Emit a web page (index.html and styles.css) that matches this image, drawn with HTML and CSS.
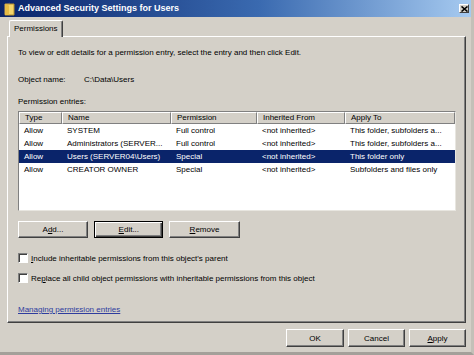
FILE: index.html
```html
<!DOCTYPE html>
<html>
<head>
<meta charset="utf-8">
<title>Advanced Security Settings for Users</title>
<link rel="stylesheet" href="styles.css">
</head>
<body>
<div class="window">
  <div class="titlebar">
    <svg class="ticon" width="12" height="14" viewBox="0 0 12 14">
      <path d="M1 2 L7 0.5 L7 13.5 L1 12 Z" fill="#2a3f8f"/>
      <path d="M2 2 L11 2 L11 13 L2 13 Z" fill="#f4d56a" stroke="#b8902a" stroke-width="1"/>
      <path d="M2 2 L6 3.5 L6 13 L2 13 Z" fill="#e6bb45"/>
    </svg>
    <span class="title">Advanced Security Settings for Users</span>
    <span class="close"><svg width="7" height="6" viewBox="0 0 7 6"><path d="M0.5 0.5 L6.5 5.5 M6.5 0.5 L0.5 5.5" stroke="#000" stroke-width="1.6"/></svg></span>
  </div>
  <div class="client">
    <div class="tabs"><div class="tab">Permissions</div></div>
    <div class="panel">
      <p class="intro">To view or edit details for a permission entry, select the entry and then click Edit.</p>
      <div class="objrow"><span class="lbl">Object name:</span><span>C:\Data\Users</span></div>
      <div class="entries-lbl">Permission entries:</div>
      <div class="list">
        <div class="row hdr">
          <div class="hc">Type</div><div class="hc">Name</div><div class="hc">Permission</div><div class="hc">Inherited From</div><div class="hc">Apply To</div>
        </div>
        <div class="row">
          <div class="c">Allow</div><div class="c">SYSTEM</div><div class="c">Full control</div><div class="c">&lt;not inherited&gt;</div><div class="c">This folder, subfolders a...</div>
        </div>
        <div class="row">
          <div class="c">Allow</div><div class="c">Administrators (SERVER...</div><div class="c">Full control</div><div class="c">&lt;not inherited&gt;</div><div class="c">This folder, subfolders a...</div>
        </div>
        <div class="row sel">
          <div class="c">Allow</div><div class="c">Users (SERVER04\Users)</div><div class="c">Special</div><div class="c">&lt;not inherited&gt;</div><div class="c">This folder only</div>
        </div>
        <div class="row">
          <div class="c">Allow</div><div class="c">CREATOR OWNER</div><div class="c">Special</div><div class="c">&lt;not inherited&gt;</div><div class="c">Subfolders and files only</div>
        </div>
      </div>
      <div class="btnrow">
        <div class="btn">A<u>d</u>d...</div>
        <div class="btn default">&#8202;<u>E</u>dit...</div>
        <div class="btn wide"><u>R</u>emove</div>
      </div>
      <div class="chk"><span class="box"></span><span><u>I</u>nclude inheritable permissions from this object's parent</span></div>
      <div class="chk"><span class="box"></span><span>Re<u>p</u>lace all child object permissions with inheritable permissions from this object</span></div>
      <a class="link" href="#">Managing permission entries</a>
    </div>
    <div class="footer">
      <div class="btn fbtn ok">OK</div>
      <div class="btn fbtn">Cancel</div>
      <div class="btn fbtn"><u>A</u>pply</div>
    </div>
  </div>
</div>
</body>
</html>
```
FILE: styles.css
```css
html, body {
  margin: 0;
  padding: 0;
}
body {
  width: 474px;
  height: 355px;
  overflow: hidden;
  background: #d4d0c8;
  font-family: "Liberation Sans", Arial, sans-serif;
  font-size: 8px;
  color: #000;
}
.window {
  width: 474px;
  height: 355px;
  box-sizing: border-box;
  border-right: 3px solid #c4c0b8;
  border-bottom: 3px solid #a4a09a;
  display: flex;
  flex-direction: column;
}
.titlebar {
  height: 17px;
  flex: none;
  display: flex;
  align-items: center;
  padding-left: 3px;
  background: linear-gradient(to right, #0a246a 0%, #3a6ab0 55%, #a6caf0 100%);
}
.ticon {
  flex: none;
  display: block;
}
.title {
  margin-left: 3px;
  color: #fff;
  font-weight: bold;
  font-size: 9px;
  line-height: 17px;
  white-space: nowrap;
}
.close {
  margin-left: auto;
  margin-right: 2px;
  width: 10px;
  height: 9px;
  box-sizing: border-box;
  background: #d4d0c8;
  border: 1px solid;
  border-color: #fff #404040 #404040 #fff;
  display: flex;
  align-items: center;
  justify-content: center;
}
.close svg {
  display: block;
}
.client {
  flex: 1;
  display: flex;
  flex-direction: column;
}
.tabs {
  margin-top: 3px;
  padding-left: 9px;
  display: flex;
  height: 16px;
}
.tab {
  position: relative;
  z-index: 1;
  height: 17px;
  box-sizing: border-box;
  padding: 0 4px;
  line-height: 16px;
  background: #d4d0c8;
  border-top: 1px solid #fff;
  border-left: 1px solid #fff;
  border-right: 1px solid #404040;
  box-shadow: inset -1px 0 0 #808080;
  border-radius: 2px 2px 0 0;
}
.panel {
  margin-left: 7px;
  width: 459px;
  height: 287px;
  box-sizing: border-box;
  border-top: 1px solid #fff;
  border-left: 1px solid #fff;
  border-right: 1px solid #404040;
  border-bottom: 1px solid #404040;
  box-shadow: inset -1px -1px 0 #808080;
  padding: 10px 0 0 10px;
  display: flex;
  flex-direction: column;
  align-items: flex-start;
}
.intro {
  margin: 0;
  line-height: 11px;
  white-space: nowrap;
}
.objrow {
  margin-top: 16px;
  line-height: 11px;
  display: flex;
}
.lbl {
  width: 66px;
}
.entries-lbl {
  margin-top: 11px;
  line-height: 11px;
}
.list {
  margin-top: 4px;
  width: 438px;
  height: 100px;
  box-sizing: border-box;
  background: #fff;
  border: 1px solid;
  border-color: #808080 #e8e6e0 #e8e6e0 #808080;
}
.row {
  display: grid;
  grid-template-columns: 43px 109px 86px 88px 110px;
  height: 13px;
  line-height: 13px;
  white-space: nowrap;
}
.hdr {
  height: 12px;
  line-height: 10px;
}
.hc {
  background: #d4d0c8;
  box-sizing: border-box;
  border-top: 1px solid #fff;
  border-left: 1px solid #fff;
  border-right: 1px solid #808080;
  border-bottom: 1px solid #808080;
  padding-left: 5px;
  overflow: hidden;
}
.c {
  padding-left: 5px;
  overflow: hidden;
}
.row.hdr + .row {
  margin-top: 0;
}
.sel {
  background: #0a246a;
  color: #fff;
}
.btnrow {
  margin-top: 10px;
  display: flex;
  gap: 6px;
}
.btn {
  width: 70px;
  height: 17px;
  box-sizing: border-box;
  background: #d4d0c8;
  border: 1px solid;
  border-color: #fff #404040 #404040 #fff;
  box-shadow: inset -1px -1px 0 #808080;
  display: flex;
  align-items: center;
  justify-content: center;
  line-height: 11px;
}
.btn.wide {
  width: 71px;
}
.btn.default {
  width: 69px;
  border-color: #000;
  box-shadow: inset 1px 1px 0 #fff, inset -1px -1px 0 #404040, inset -2px -2px 0 #808080;
}
.chk {
  margin-top: 10px;
  display: flex;
  align-items: center;
  gap: 3px;
  height: 10px;
  line-height: 11px;
  white-space: nowrap;
}
.btnrow + .chk {
  margin-top: 15px;
}
.box {
  width: 10px;
  height: 10px;
  box-sizing: border-box;
  background: #fff;
  border: 1px solid;
  border-color: #808080 #fff #fff #808080;
  box-shadow: inset 1px 1px 0 #404040;
  flex: none;
}
.link {
  margin-top: 21px;
  line-height: 11px;
  color: #2f3c9e;
  text-decoration: underline;
}
.footer {
  margin-top: 6px;
  display: flex;
  justify-content: flex-end;
  gap: 4px;
  padding-right: 5px;
}
.fbtn {
  width: 57px;
  height: 18px;
}
.fbtn.ok {
  width: 58px;
}
```
